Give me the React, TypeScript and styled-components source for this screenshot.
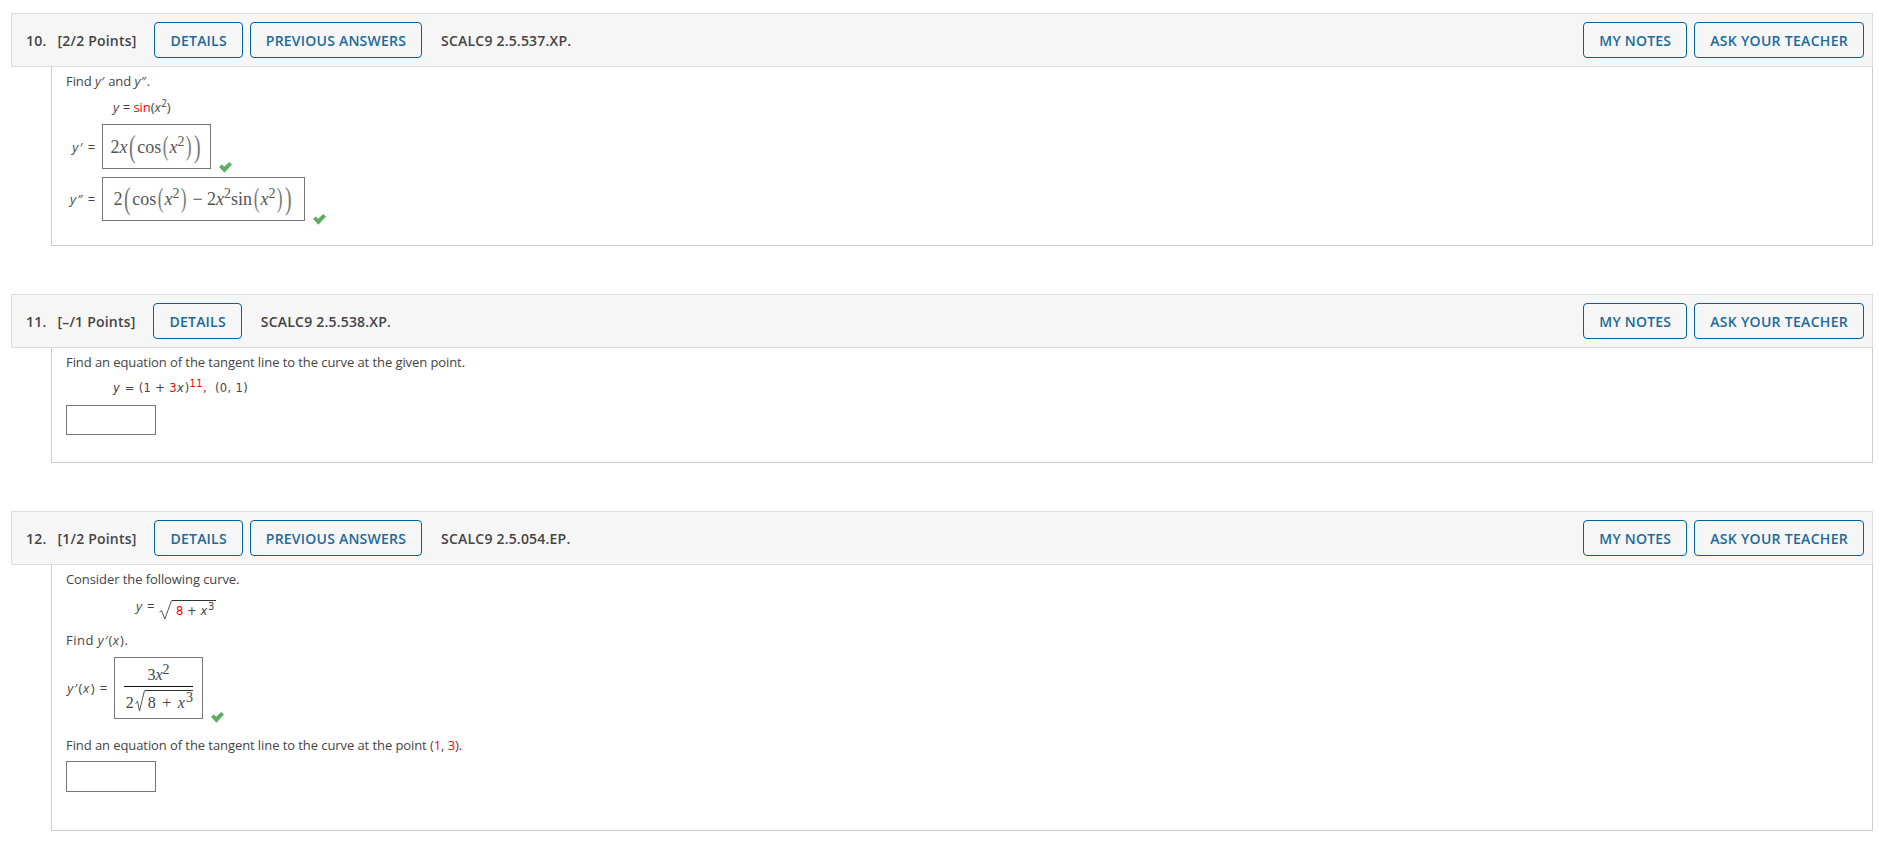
import React from "react";
import styled, { createGlobalStyle } from "styled-components";

const GlobalStyle = createGlobalStyle`
	html, body {
		margin: 0;
		padding: 0;
		background: #fff;
	}
	body {
		font-family: "Open Sans", "Noto Sans", sans-serif;
		font-size: 13px;
		color: #444;
		letter-spacing: -0.08px;
	}
`;

const Page = styled.main`
	padding: 13px 6px 0 11px;
`;

const Question = styled.section`
	margin-bottom: 48px;
`;

const Header = styled.header`
	box-sizing: border-box;
	height: 54px;
	display: flex;
	align-items: center;
	gap: 7px;
	padding: 0 8px 0 14px;
	background: #f6f6f6;
	border: 1px solid #ddd;
	font-size: 14px;
	font-weight: 600;
	letter-spacing: 0.2px;
	color: #444;
`;

const QuestionNumber = styled.span`
	margin-right: 4px;
`;

const Points = styled.span`
	margin-right: 11px;
`;

const ActionButton = styled.button<{ $wide?: boolean }>`
	box-sizing: border-box;
	height: 36px;
	padding: 0 15px;
	background: #f6f6f6;
	border: 1px solid #00629b;
	border-radius: 4px;
	color: #1b6a9c;
	font-family: inherit;
	font-size: 14px;
	font-weight: 600;
	letter-spacing: ${(p) => (p.$wide ? 0.3 : 0.22)}px;
`;

const Code = styled.span`
	margin-left: 12px;
	flex: 1;
`;

const Body = styled.div<{ $height: number }>`
	box-sizing: border-box;
	height: ${(p) => p.$height}px;
	margin-left: 40px;
	padding: 5px 0 0 14px;
	border-left: 1px solid #ccc;
	border-right: 1px solid #ccc;
	border-bottom: 1px solid #ccc;
`;

const Line = styled.div<{ $top?: number; $indent?: number; $loose?: boolean }>`
	height: 18px;
	line-height: 18px;
	margin-top: ${(p) => p.$top ?? 0}px;
	margin-left: ${(p) => p.$indent ?? 0}px;
	letter-spacing: ${(p) => (p.$loose ? "0.5px" : "inherit")};
	white-space: pre;
`;

const Var = styled.i`
	font-style: italic;
	margin-right: 0.6px;
`;

const Prime = styled.span`
	margin-right: 0.6px;
`;

const Red = styled.span`
	color: #f00;
`;

const Sup = styled.sup<{ $red?: boolean }>`
	font-size: 10px;
	line-height: 0;
	color: ${(p) => (p.$red ? "#f00" : "inherit")};
`;

const SpacedLine = styled(Line)`
	font-family: "DejaVu Sans", sans-serif;
	font-size: 11.5px;
	letter-spacing: 0.35px;
`;

const AnswerRow = styled.div<{ $top?: number }>`
	display: flex;
	align-items: center;
	margin-top: ${(p) => p.$top ?? 8}px;
`;

const AnswerLabel = styled.span<{ $width: number }>`
	width: ${(p) => p.$width}px;
	padding-right: 6px;
	box-sizing: border-box;
	text-align: right;
	letter-spacing: 0.85px;
	white-space: pre;
`;

const MathBox = styled.div<{ $width: number; $height: number }>`
	box-sizing: border-box;
	width: ${(p) => p.$width}px;
	height: ${(p) => p.$height}px;
	display: flex;
	align-items: center;
	justify-content: center;
	border: 1px solid #777;
	font-family: "Liberation Serif", serif;
	font-size: 18px;
	letter-spacing: 0;
	color: #555;
	white-space: pre;
`;

const MathInner = styled.span`
	display: inline-block;
	line-height: 30px;
	height: 30px;
`;

const Paren = styled.span<{ $size: number }>`
	font-size: ${(p) => p.$size}px;
	font-weight: 400;
	line-height: 0;
	color: #777;
	display: inline-block;
	transform: scaleX(0.62);
	margin: 0 -0.5px;
	vertical-align: ${(p) => (p.$size > 30 ? -4 : -2)}px;
`;

const MathSup = styled.sup`
	font-size: 14px;
	line-height: 0;
	vertical-align: 7px;
`;

const MathVar = styled.i`
	font-style: italic;
`;

const CheckIcon = styled.svg`
	flex: none;
	align-self: flex-end;
	width: 13px;
	height: 11px;
	margin: 0 0 -4px 8px;
`;

const EmptyInput = styled.div<{ $top?: number; $height: number }>`
	box-sizing: border-box;
	width: 90px;
	height: ${(p) => p.$height}px;
	margin-top: ${(p) => p.$top ?? 8}px;
	border: 1px solid #777;
	background: #fff;
`;

const RootLine = styled.div`
	display: flex;
	align-items: flex-start;
	height: 30px;
	margin: 6px 0 0 70px;
	white-space: pre;
`;

const RootEquals = styled.span`
	line-height: 18px;
	margin-top: 3px;
	letter-spacing: 0.5px;
`;

const RadicalIcon = styled.svg<{ $left: number; $top: number }>`
	flex: none;
	margin-left: ${(p) => p.$left}px;
	margin-top: ${(p) => p.$top}px;
`;

const RootBody = styled.span`
	border-top: 1px solid #333;
	padding: 0 1px 0 4px;
	margin-top: 6px;
	font-family: "DejaVu Sans", sans-serif;
	font-size: 11.5px;
	line-height: 20px;
	height: 19px;
	letter-spacing: 0.1px;
`;

const Fraction = styled.div`
	display: flex;
	flex-direction: column;
	align-items: stretch;
	width: 69px;
	font-size: 16px;
	text-align: center;
	color: #444;
`;

const Numerator = styled.div`
	height: 28px;
	line-height: 33px;
	border-bottom: 1px solid #111;
`;

const Denominator = styled.div`
	height: 29px;
	display: flex;
	align-items: flex-start;
	justify-content: flex-end;
	padding-top: 3px;
`;

const DenominatorTwo = styled.span`
	line-height: 26px;
	margin-right: 1px;
`;

const DenominatorRoot = styled.span`
	display: inline-block;
	border-top: 1px solid #333;
	padding: 0 0 0 3px;
	height: 24px;
	line-height: 23px;
	letter-spacing: 1.2px;
`;

const FractionSup = styled.sup`
	font-size: 14px;
	line-height: 0;
	vertical-align: 6px;
	letter-spacing: 0;
`;

const Check = () => (
	<CheckIcon viewBox="0 0 13 11">
		<path d="M0 4.8 L2.8 2.4 L5.2 4.8 L10.2 0 L13 2.6 L5.4 10.8 Z" fill="#5fae5f" />
	</CheckIcon>
);

const Radical = ({
	width,
	height,
	left,
	top,
}: {
	width: number;
	height: number;
	left: number;
	top: number;
}) => (
	<RadicalIcon
		$left={left}
		$top={top}
		width={width}
		height={height}
		viewBox={`0 0 ${width} ${height}`}
	>
		<path
			d={`M0.5 ${height * 0.62} L2.5 ${height * 0.52} L${width * 0.45} ${height - 1} L${width - 0.5} 0.5`}
			fill="none"
			stroke="#555"
		/>
	</RadicalIcon>
);

const QuestionHeader = ({
	num,
	points,
	code,
	previous,
}: {
	num: string;
	points: string;
	code: string;
	previous?: boolean;
}) => (
	<Header>
		<QuestionNumber>{num}</QuestionNumber>
		<Points>{points}</Points>
		<ActionButton>DETAILS</ActionButton>
		{previous && <ActionButton>PREVIOUS ANSWERS</ActionButton>}
		<Code>{code}</Code>
		<ActionButton>MY NOTES</ActionButton>
		<ActionButton $wide>ASK YOUR TEACHER</ActionButton>
	</Header>
);

const App: React.FC = () => (
	<Page>
		<GlobalStyle />
		<Question>
			<QuestionHeader num="10." points="[2/2 Points]" code="SCALC9 2.5.537.XP." previous />
			<Body $height={179}>
				<Line>
					Find <Var>y</Var>
					<Prime>′</Prime> and <Var>y</Var>
					<Prime>″</Prime>.
				</Line>
				<Line $top={8} $indent={47}>
					<Var>y</Var> = <Red>sin</Red>(<Var>x</Var>
					<Sup>2</Sup>)
				</Line>
				<AnswerRow>
					<AnswerLabel $width={36}>
						<Var>y</Var>′ =
					</AnswerLabel>
					<MathBox $width={109} $height={45}>
						<MathInner>
							2<MathVar>x</MathVar>
							<Paren $size={32}>(</Paren>
							cos
							<Paren $size={28}>(</Paren>
							<MathVar>x</MathVar>
							<MathSup>2</MathSup>
							<Paren $size={28}>)</Paren>
							<Paren $size={32}>)</Paren>
						</MathInner>
					</MathBox>
					<Check />
				</AnswerRow>
				<AnswerRow>
					<AnswerLabel $width={36}>
						<Var>y</Var>″ =
					</AnswerLabel>
					<MathBox $width={203} $height={44}>
						<MathInner>
							2<Paren $size={32}>(</Paren>
							cos
							<Paren $size={28}>(</Paren>
							<MathVar>x</MathVar>
							<MathSup>2</MathSup>
							<Paren $size={28}>)</Paren> − 2<MathVar>x</MathVar>
							<MathSup>2</MathSup>
							sin
							<Paren $size={28}>(</Paren>
							<MathVar>x</MathVar>
							<MathSup>2</MathSup>
							<Paren $size={28}>)</Paren>
							<Paren $size={32}>)</Paren>
						</MathInner>
					</MathBox>
					<Check />
				</AnswerRow>
			</Body>
		</Question>
		<Question>
			<QuestionHeader num="11." points="[–/1 Points]" code="SCALC9 2.5.538.XP." />
			<Body $height={115}>
				<Line>Find an equation of the tangent line to the curve at the given point.</Line>
				<SpacedLine $top={8} $indent={47}>
					<Var>y</Var> = (1 + <Red>3</Red>
					<Var>x</Var>)<Sup $red>11</Sup>,  (0, 1)
				</SpacedLine>
				<EmptyInput $height={30} />
			</Body>
		</Question>
		<Question>
			<QuestionHeader num="12." points="[1/2 Points]" code="SCALC9 2.5.054.EP." previous />
			<Body $height={266}>
				<Line>Consider the following curve.</Line>
				<RootLine>
					<RootEquals>
						<Var>y</Var> =
					</RootEquals>
					<Radical width={13} height={20} left={4} top={6} />
					<RootBody>
						<Red>8</Red> + <Var>x</Var>
						<Sup>3</Sup>
					</RootBody>
				</RootLine>
				<Line $top={7} $loose>
					Find <Var>y</Var>′(<Var>x</Var>).
				</Line>
				<AnswerRow>
					<AnswerLabel $width={48}>
						<Var>y</Var>′(<Var>x</Var>) =
					</AnswerLabel>
					<MathBox $width={89} $height={62}>
						<Fraction>
							<Numerator>
								3<MathVar>x</MathVar>
								<FractionSup>2</FractionSup>
							</Numerator>
							<Denominator>
								<DenominatorTwo>2</DenominatorTwo>
								<Radical width={10} height={22} left={0} top={0} />
								<DenominatorRoot>
									8 + <MathVar>x</MathVar>
									<FractionSup>3</FractionSup>
								</DenominatorRoot>
							</Denominator>
						</Fraction>
					</MathBox>
					<Check />
				</AnswerRow>
				<Line $top={17}>
					Find an equation of the tangent line to the curve at the point (<Red>1</Red>, <Red>3</Red>).
				</Line>
				<EmptyInput $top={7} $height={31} />
			</Body>
		</Question>
	</Page>
);

export default App;
